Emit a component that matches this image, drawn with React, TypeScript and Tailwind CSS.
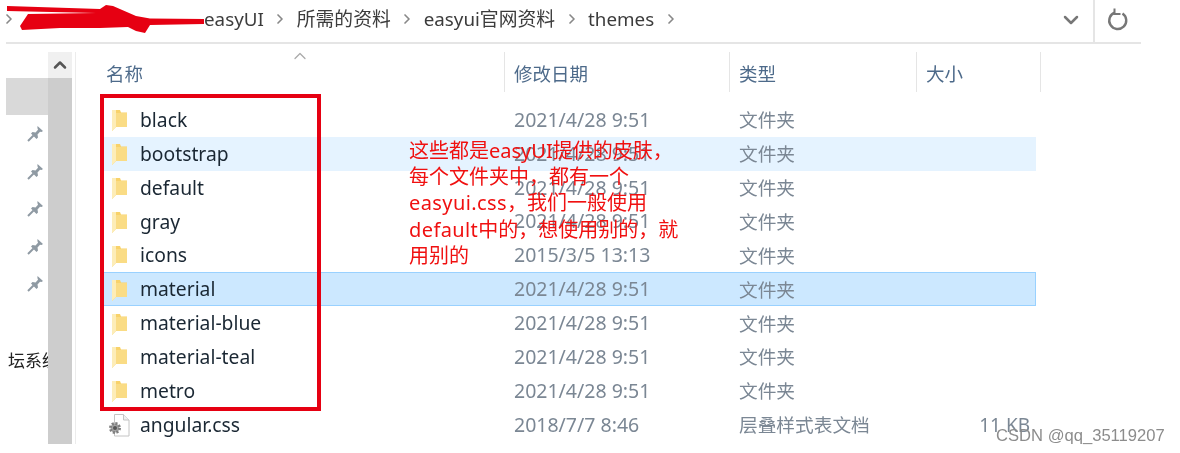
import { ChevronDown, ChevronUp, ChevronRight } from 'lucide-react';

const FONT = "font-['Noto_Sans','Noto_Sans_CJK_SC',sans-serif]";

const rows = [
    { name: 'black', date: '2021/4/28 9:51', type: '文件夹' },
    { name: 'bootstrap', date: '2021/4/28 9:51', type: '文件夹', state: 'hover' },
    { name: 'default', date: '2021/4/28 9:51', type: '文件夹' },
    { name: 'gray', date: '2021/4/28 9:51', type: '文件夹' },
    { name: 'icons', date: '2015/3/5 13:13', type: '文件夹' },
    { name: 'material', date: '2021/4/28 9:51', type: '文件夹', state: 'selected' },
    { name: 'material-blue', date: '2021/4/28 9:51', type: '文件夹' },
    { name: 'material-teal', date: '2021/4/28 9:51', type: '文件夹' },
    { name: 'metro', date: '2021/4/28 9:51', type: '文件夹' },
    { name: 'angular.css', date: '2018/7/7 8:46', type: '层叠样式表文档', size: '11 KB', file: true },
];

const crumbs = ['easyUI', '所需的资料', 'easyui官网资料', 'themes'];

function FolderIcon() {
    return (
        <svg width="16" height="22" viewBox="0 0 16 22" className="shrink-0">
            <path d="M0 1h8l1 2.500h6V18H4l-4 4z" fill="#f8d26a" />
            <path d="M4 4h11v14H4z" fill="#fadc85" />
            <path d="M0 1h4v17l-4 4z" fill="#fdedb8" />
        </svg>
    );
}

function CssIcon() {
    return (
        <svg width="23" height="23" viewBox="0 0 23 23" className="shrink-0">
            <path d="M6.500 .5h9l5.500 5.500v16h-14.500z" fill="#fff" stroke="#c4c4c4" />
            <path d="M15.500 .5v5.500h5.500" fill="#f0f0f0" stroke="#c4c4c4" />
            <circle cx="7" cy="14" r="4.500" fill="#a5a5a5" stroke="#7e7e7e" strokeWidth="3" strokeDasharray="2 1.500" />
            <circle cx="7" cy="14" r="2" fill="#555" />
        </svg>
    );
}

function PinIcon() {
    return (
        <svg width="18" height="18" viewBox="0 0 18 18">
            <path d="M11.500 1l5.500 5-1.500 1-1.500-.3-2.500 2.800.5 3-1.500 1.500L5 8.500l1.500-1.500 3 .5 2.500-2.800-.6-1.700z" fill="#8f9aa3" />
            <path d="M7.500 10.500L2 16" stroke="#8f9aa3" strokeWidth="2" />
        </svg>
    );
}

function FileRow({ name, date, type, size, state, file }: (typeof rows)[number]) {
    const bg = state === 'selected'
        ? 'bg-[#cce8ff] border border-[#99d1ff]'
        : state === 'hover' ? 'bg-[#e5f3ff] border border-[#e5f3ff]' : 'border border-transparent';
    return (
        <div className={`flex h-[33.870px] items-center pt-px ${bg}`}>
            <div className="flex w-[410px] shrink-0 items-center pl-[8px]">
                <span className="flex w-[28px] justify-start">
                    {file ? <span className="ml-[-4px]"><CssIcon /></span> : <FolderIcon />}
                </span>
                <span className="text-[19.300px] text-[#1a2733]">{name}</span>
            </div>
            <span className="mb-[2px] w-[225px] shrink-0 text-[19.500px] text-[#7b8794]">{date}</span>
            <span className="w-[187px] shrink-0 text-[18.700px] text-[#7b8794]">{type}</span>
            {size && <span className="w-[104px] text-right text-[19px] text-[#7b8794]">{size}</span>}
        </div>
    );
}

export default function App() {
    return (
        <div className={`relative h-[453px] w-[1180px] overflow-hidden bg-white blur-[0.4px] ${FONT}`}>
            {/* address bar */}
            <div className="ml-[6px] flex h-[44px] w-[1135px] items-center border-b-2 border-[#e5e5e5]">
                <div className="mb-[4px] flex items-center">
                    <ChevronRight className="ml-[-5px] h-4 w-4 text-[#888]" strokeWidth={2.500} />
                    <div className="w-[187px] shrink-0" />
                    {crumbs.map(c => (
                        <div key={c} className="flex items-center">
                            <span className="text-[18.800px] text-[#3c3c3c]">{c}</span>
                            <ChevronRight className="mx-[8.500px] h-[16px] w-[16px] text-[#888]" strokeWidth={2.500} />
                        </div>
                    ))}
                </div>
                <div className="flex-1" />
                <ChevronDown className="mr-[10px] mb-[2px] h-6 w-6 text-[#777]" strokeWidth={2.500} />
                <div className="flex h-full w-[48px] items-center justify-center border-l-2 border-[#e5e5e5]">
                    <svg width="24" height="24" viewBox="0 0 24 24" fill="none" stroke="#777" strokeWidth="2.400" className="mb-[3px]">
                        <path d="M16.500 5.500A8.500 8.500 0 1 1 9 4.500" />
                        <path d="M8.500 .5v5.500h6" strokeWidth="2" />
                    </svg>
                </div>
            </div>

            <div className="mt-[8px] flex h-[392px]">
                {/* sidebar */}
                <div className="ml-[6px] flex w-[42px] shrink-0 flex-col overflow-hidden">
                    <div className="mt-[26px] h-[37px] bg-[#d9d9d9]" />
                    <div className="mt-[10px] flex flex-col items-center gap-[19.500px] pl-[16px]">
                        {[0, 1, 2, 3, 4].map(i => <PinIcon key={i} />)}
                    </div>
                    <span className="mt-[55px] ml-[2px] whitespace-nowrap text-[17px] text-[#222]">坛系统</span>
                </div>
                {/* scrollbar */}
                <div className="flex w-[24px] shrink-0 flex-col bg-[#cdcdcd]">
                    <div className="flex h-[26px] items-center justify-center bg-[#f0f0f0]">
                        <ChevronUp className="h-5 w-5 text-[#555]" strokeWidth={3} />
                    </div>
                </div>
                <div className="ml-[3px] w-px bg-[#ececec]" />

                {/* file list */}
                <div className="ml-[27px] flex w-[933px] flex-col">
                    <div className="relative flex h-[40px] text-[18.500px] leading-[43px] text-[#4d6a8a]">
                        <span className="w-[401px] shrink-0 pl-[3px]">名称</span>
                        <ChevronUp className="absolute left-[187px] top-[-6px] h-5 w-5 text-[#aaa]" strokeWidth={1.500} />
                        <span className="h-full w-[225px] shrink-0 border-l border-[#e5e5e5] pl-[9px]">修改日期</span>
                        <span className="h-full w-[187px] shrink-0 border-l border-[#e5e5e5] pl-[9px]">类型</span>
                        <span className="h-full w-[125px] shrink-0 border-x border-[#e5e5e5] pl-[9px]">大小</span>
                    </div>
                    <div className="mt-[11px]">
                        {rows.map(r => <FileRow key={r.name} {...r} />)}
                    </div>
                </div>
            </div>

            {/* red marker scribble over the path */}
            <svg className="absolute left-0 top-0" width="210" height="36" viewBox="0 0 210 36">
                <path d="M7 6L100 9L106 5L113 6L136 16L150 18.500L204 19V24L150 25L145 33L136 31L128 27L100 28L60 28L22 30L20 26L28 14L96 13L7 11z" fill="#e60012" />
            </svg>

            {/* annotation */}
            <div className="absolute left-[100px] top-[94px] h-[317px] w-[221px] border-[4px] border-[#e60012]" />
            <div className="absolute left-[409px] top-[138px] w-[280px] text-[20px] leading-[26.200px] text-[#f01010]">
                这些都是easyUI提供的皮肤，<br />
                每个文件夹中，都有一个<br />
                <span className="tracking-[0.4px]">easyui.css</span>，我们一般使用<br />
                <span className="tracking-[0.4px]">default</span>中的，想使用别的，就<br />
                用别的
            </div>
            <span className="absolute left-[996px] top-[424px] font-['Liberation_Sans',sans-serif] text-[16.600px] text-[#8c8c8c]">CSDN @qq_35119207</span>
        </div>
    );
}
